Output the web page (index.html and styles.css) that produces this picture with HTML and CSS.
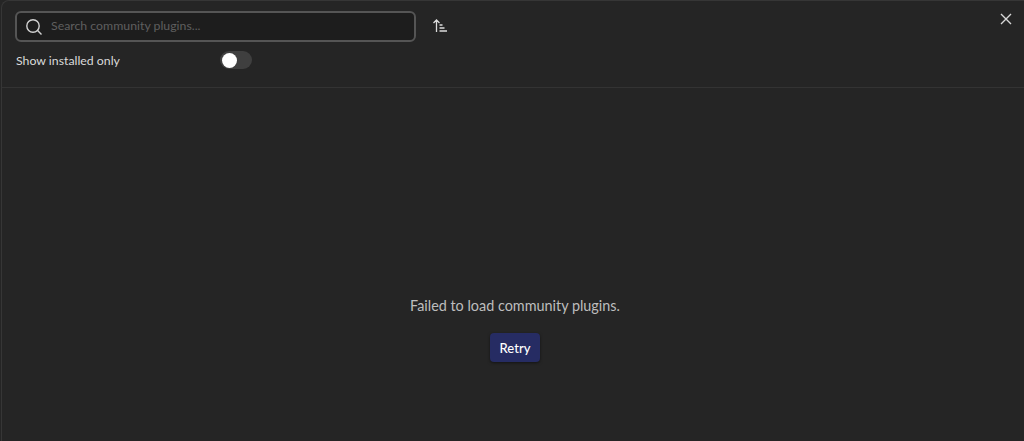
FILE: index.html
```html
<!DOCTYPE html>
<html lang="en">
<head>
<meta charset="utf-8">
<title>Community plugins</title>
<link rel="stylesheet" href="styles.css">
</head>
<body>
<div class="modal">
  <header class="head">
    <div class="search-row">
      <div class="search">
        <svg class="search-icon" viewBox="0 0 18 18" width="18" height="18"><circle cx="8" cy="8" r="6.2"/><path d="M12.6 12.6 16.5 16.5"/></svg>
        <span class="placeholder">Search community plugins...</span>
      </div>
      <button class="sort" aria-label="Sort">
        <svg viewBox="0 0 16 16" width="16" height="16"><path d="M4.5 14V2M1.5 5 4.5 2 7.5 5M7.5 7H10.5M7.5 10H12.5M7.5 13H15"/></svg>
      </button>
    </div>
    <div class="toggle-row">
      <span class="toggle-label">Show installed only</span>
      <span class="toggle"><span class="knob"></span></span>
    </div>
    <button class="close" aria-label="Close">
      <svg viewBox="0 0 12 12" width="12" height="12"><path d="M1 1 11 11M11 1 1 11"/></svg>
    </button>
  </header>
  <main class="content">
    <p class="message">Failed to load community plugins.</p>
    <button class="retry">Retry</button>
  </main>
</div>
</body>
</html>
```
FILE: styles.css
```css
html, body {
  margin: 0;
  height: 100%;
  background: #252525;
}
body {
  font-family: Lato, Roboto, sans-serif;
  overflow: hidden;
}
.modal {
  box-sizing: border-box;
  height: 441px;
  margin-left: 1px;
  background: #252525;
  border: 1px solid #363636;
  border-width: 1px 0 0 1px;
  border-top-left-radius: 8px;
  display: flex;
  flex-direction: column;
}
.head {
  position: relative;
  box-sizing: border-box;
  height: 87px;
  padding: 10px 0 0 13px;
  border-bottom: 1px solid #333333;
}
.search-row {
  display: flex;
  align-items: center;
}
.search {
  box-sizing: border-box;
  width: 401px;
  height: 31px;
  display: flex;
  align-items: center;
  gap: 8px;
  padding-left: 8px;
  background: #1d1d1d;
  border: 2px solid #555555;
  border-radius: 6px;
}
.search-icon {
  fill: none;
  stroke: #d2d2d2;
  stroke-width: 1.4;
}
.placeholder {
  font-size: 12.3px;
  line-height: 16px;
  padding-bottom: 1px;
  color: #5f5f5f;
}
.sort {
  margin-left: 16px;
  margin-top: -2px;
  padding: 0;
  display: flex;
  background: none;
  border: 0;
}
.sort svg {
  fill: none;
  stroke: #dcdcdc;
  stroke-width: 1.3;
}
.toggle-row {
  display: flex;
  align-items: center;
  height: 26px;
  margin-top: 5px;
  width: 236px;
  padding-left: 1px;
  justify-content: space-between;
}
.toggle-label {
  font-size: 12.3px;
  color: #dadada;
}
.toggle {
  width: 32px;
  height: 18px;
  border-radius: 9px;
  background: #3f3f3f;
  display: flex;
  align-items: center;
  padding-left: 2px;
  box-sizing: border-box;
}
.knob {
  width: 15px;
  height: 15px;
  border-radius: 50%;
  background: #ffffff;
}
.close {
  position: absolute;
  top: 12px;
  right: 12px;
  padding: 0;
  display: flex;
  background: none;
  border: 0;
}
.close svg {
  fill: none;
  stroke: #d8d8d8;
  stroke-width: 1.4;
}
.content {
  flex: 1;
  display: flex;
  flex-direction: column;
  align-items: center;
  padding-top: 208px;
  padding-left: 4px;
}
.message {
  margin: 0;
  font-size: 14.4px;
  line-height: 20px;
  color: #bdbdbd;
}
.retry {
  margin-top: 17px;
  width: 50px;
  height: 29px;
  padding: 0;
  font: 500 13px Lato, Roboto, sans-serif;
  color: #ffffff;
  background: #262c63;
  border: 0;
  border-radius: 4px;
  box-shadow: 0 1px 3px rgba(0,0,0,.5);
}
```
